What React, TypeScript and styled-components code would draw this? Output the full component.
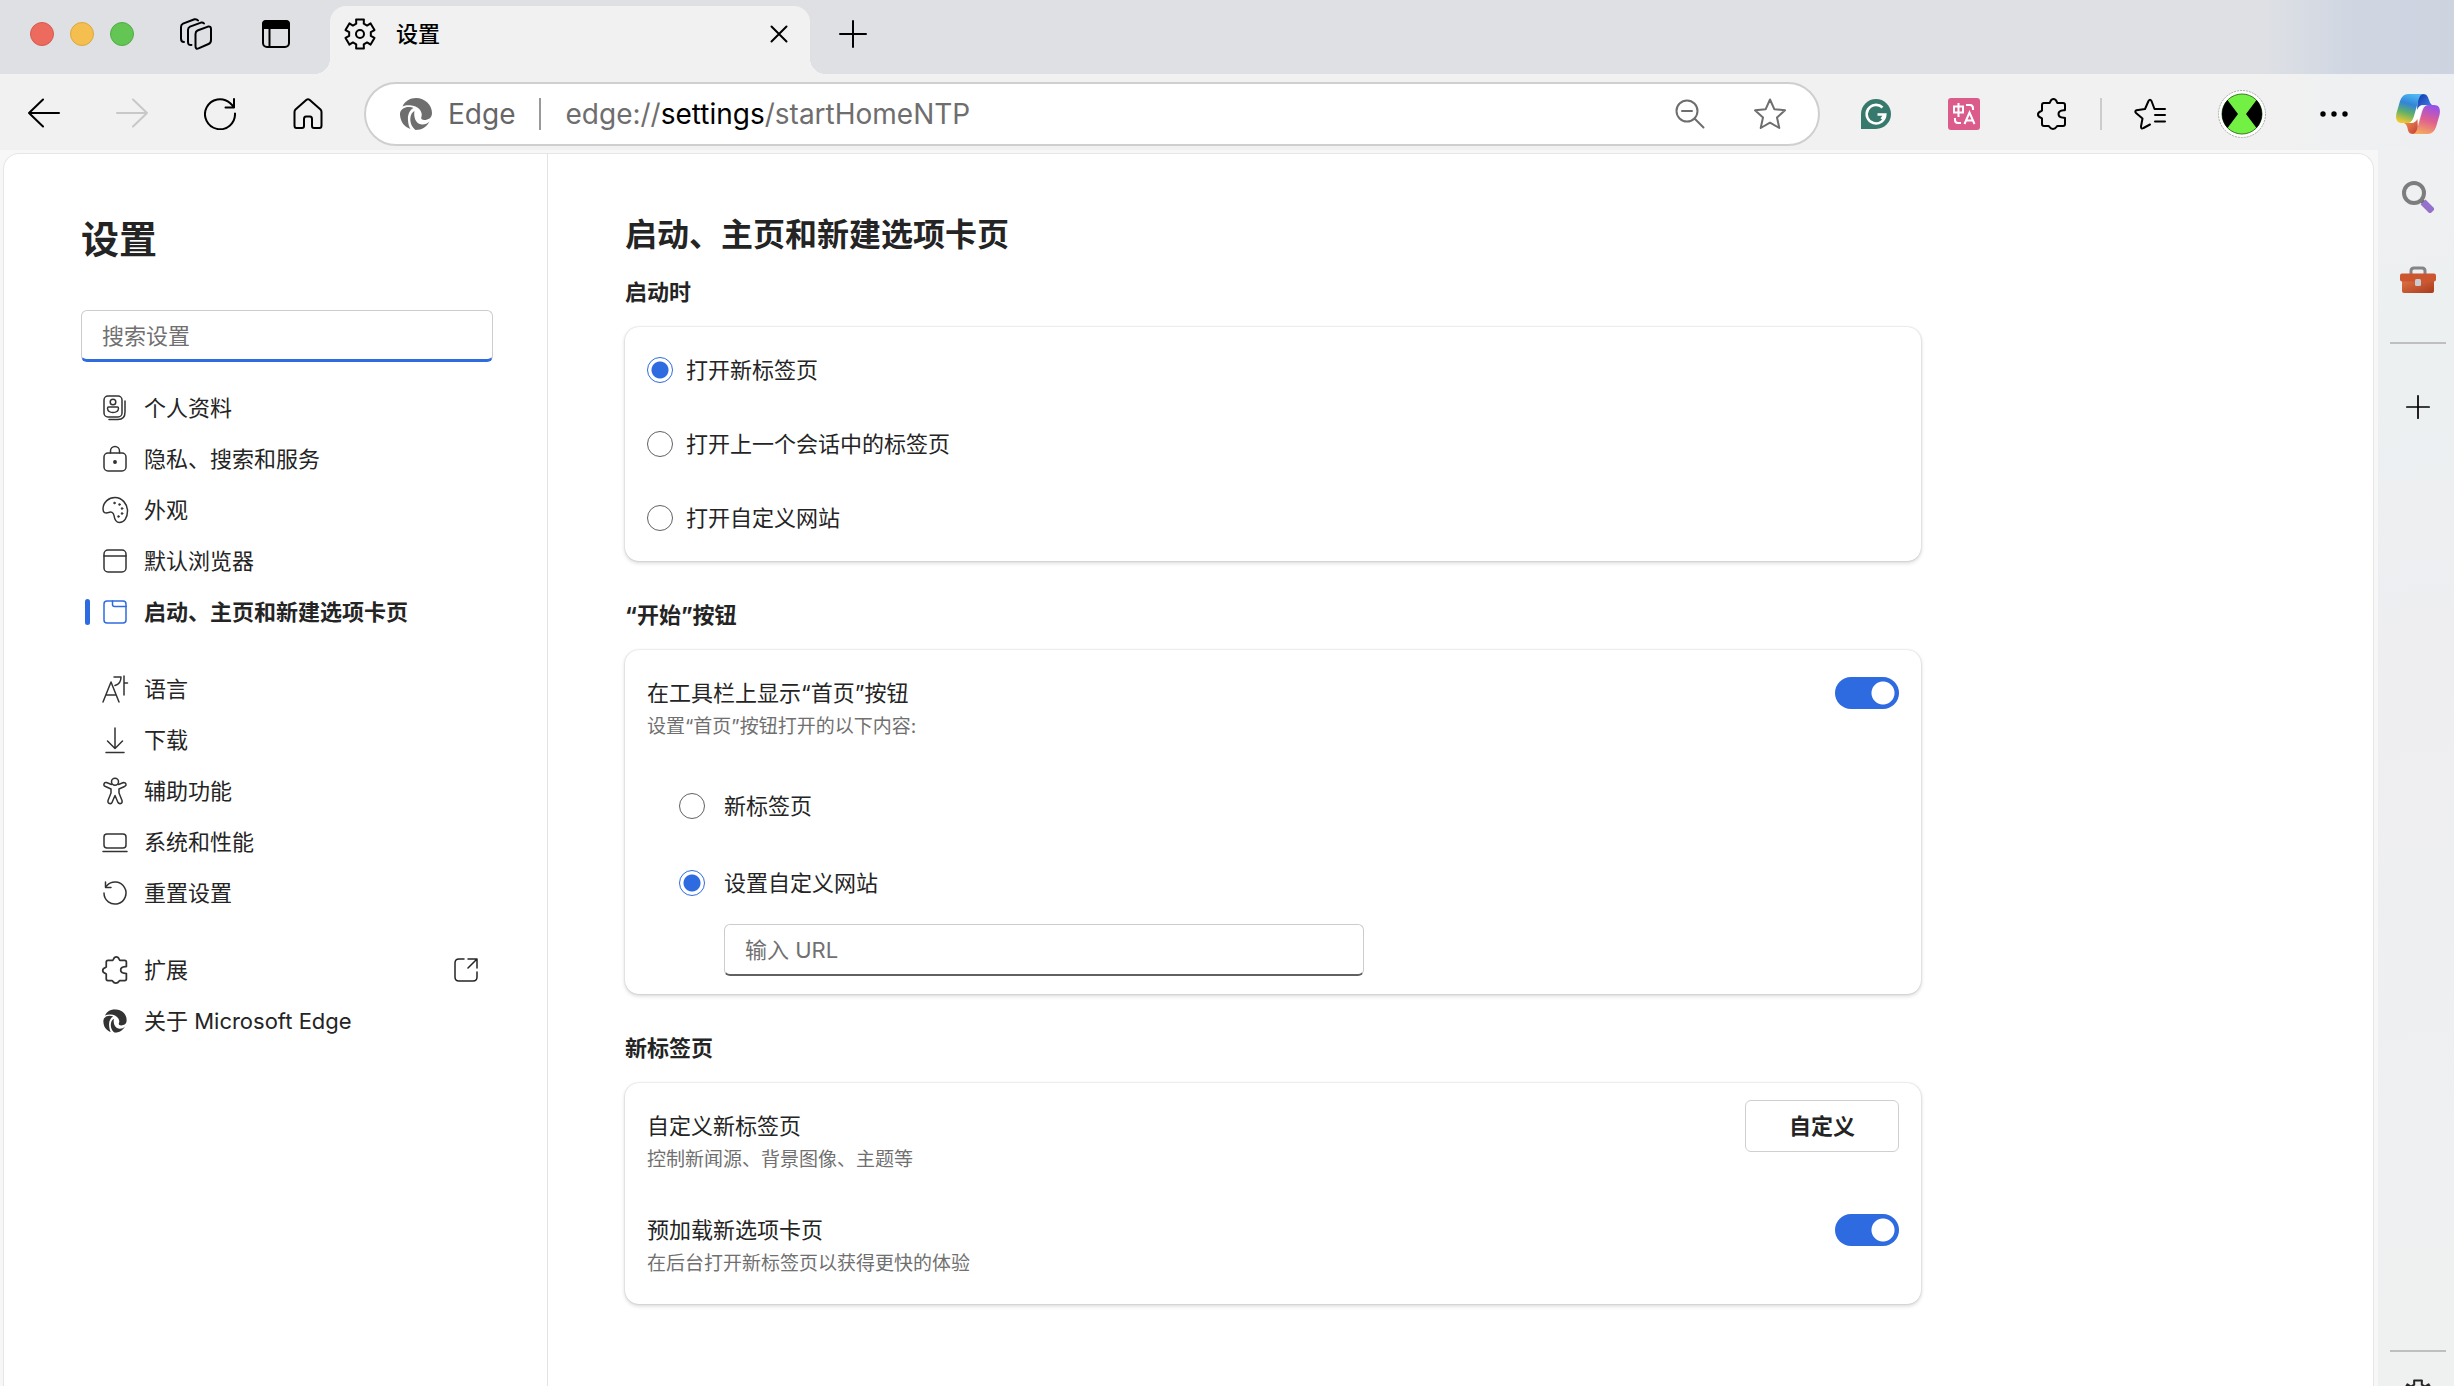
import React from "react";
import styled, { createGlobalStyle } from "styled-components";

const accent = "#2f6be0";
const ink = "#242424";
const muted = "#707070";

const GlobalStyle = createGlobalStyle`
  * { box-sizing: border-box; }
  body {
    margin: 0;
    background: #f1f1f1;
    color: ${ink};
    font-family: Inter, "Noto Sans CJK SC", sans-serif;
    font-size: 22px;
    line-height: 32px;
  }
  button, input { font: inherit; color: inherit; }
`;

/* ---------- browser frame ---------- */

const Window = styled.div`
  display: flex;
  flex-direction: column;
  height: 100vh;
  overflow: hidden;
`;

const TabStrip = styled.header`
  display: flex;
  align-items: flex-start;
  flex: none;
  padding: 6px 0 0 30px;
  background: linear-gradient(90deg, #dee0e4 0, #dee0e4 calc(100% - 190px), #cfd6e2 calc(100% - 100px), #ced3e0 100%);
`;

const Lights = styled.div`
  display: flex;
  align-items: center;
  gap: 16px;
  height: 56px;
  margin-right: 34px;
`;

const Light = styled.button<{ $fill: string; $edge: string }>`
  width: 24px;
  height: 24px;
  padding: 0;
  border: 1px solid ${(p) => p.$edge};
  border-radius: 50%;
  background: ${(p) => p.$fill};
`;

const IconButton = styled.button<{ $color?: string }>`
  display: flex;
  align-items: center;
  justify-content: center;
  flex: none;
  width: 56px;
  height: 56px;
  padding: 0;
  border: 0;
  background: none;
  color: ${(p) => p.$color ?? "#000"};
`;

const StripTools = styled.div`
  display: flex;
  gap: 24px;
  margin-right: 26px;
`;

const Tab = styled.div`
  position: relative;
  display: flex;
  align-items: center;
  width: 480px;
  height: 68px;
  margin-right: 15px;
  padding: 0 3px 12px 14px;
  border-radius: 16px 16px 0 0;
  background: #f1f1f1;
  color: #000;

  &::before,
  &::after {
    content: "";
    position: absolute;
    bottom: 0;
    width: 16px;
    height: 16px;
  }
  &::before {
    right: 100%;
    background: radial-gradient(circle at 0 0, transparent 16px, #f1f1f1 16px);
  }
  &::after {
    left: 100%;
    background: radial-gradient(circle at 100% 0, transparent 16px, #f1f1f1 16px);
  }
`;

const TabTitle = styled.span`
  flex: 1;
  margin-left: 20px;
  font-weight: 500;
`;

const Toolbar = styled.div`
  display: flex;
  align-items: center;
  flex: none;
  padding: 8px 8px 4px 16px;
  background: linear-gradient(90deg, #f1f1f1 calc(100% - 200px), #edeff2 100%);
`;

const ToolGroup = styled.div<{ $gap: number }>`
  display: flex;
  align-items: center;
  gap: ${(p) => p.$gap}px;
`;

const AddressBar = styled.div`
  display: flex;
  align-items: center;
  flex: 1;
  height: 64px;
  margin: 0 28px;
  padding: 0 20px 0 34px;
  border: 2px solid #cfcfcf;
  border-radius: 32px;
  background: #fff;
  color: #6e6e6e;
  font-size: 28px;
`;

const SiteName = styled.span`
  margin-left: 16px;
  color: #666;
`;

const Divider = styled.span<{ $color: string; $gap: number }>`
  flex: none;
  width: 2px;
  height: 32px;
  margin: 0 ${(p) => p.$gap}px;
  background: ${(p) => p.$color};
`;

const UrlText = styled.div`
  flex: 1;
  outline: none;
  white-space: nowrap;
`;

const UrlHost = styled.span`
  color: #000;
`;

const Body = styled.div`
  display: flex;
  flex: 1;
  min-height: 0;
`;

const PageFrame = styled.div`
  display: flex;
  flex: 1;
  min-width: 0;
  padding: 3px 4px 0 3px;
  background: #f7f7f7;
`;

const Page = styled.div`
  display: flex;
  flex: 1;
  border: 1px solid #e6e6e6;
  border-bottom: 0;
  border-radius: 16px 16px 0 0;
  background: #fff;
`;

const SideRail = styled.aside`
  display: flex;
  flex-direction: column;
  align-items: center;
  flex: none;
  width: 76px;
  padding: 19px 0 0 4px;
  background: linear-gradient(170deg, #eff0f2 0, #ecf0f1 20%, #eeeef1 40%, #eff1f1 100%);
`;

const RailTools = styled.div`
  display: flex;
  flex-direction: column;
  gap: 27px;
`;

const RailRule = styled.hr`
  flex: none;
  width: 56px;
  height: 2px;
  margin: 34px 0 35px;
  border: 0;
  background: #bfbfbf;
`;

const RailFoot = styled.div`
  display: flex;
  flex-direction: column;
  align-items: center;
  flex: none;
  height: 36px;
  margin-top: auto;

  hr { margin: 0 0 27px; }
  svg { flex: none; }
`;

/* ---------- settings navigation ---------- */

const Nav = styled.nav`
  flex: none;
  width: 544px;
  padding: 57px 54px 0 77px;
  border-right: 1px solid #e3e3e3;
`;

const NavTitle = styled.h2`
  margin: 0 0 43px;
  font-size: 38px;
  line-height: 56px;
  font-weight: 700;
`;

const TextField = styled.input<{ $focus?: boolean }>`
  display: block;
  width: 100%;
  height: 52px;
  padding: ${(p) => (p.$focus ? "2px 20px 0" : "0 20px")};
  border: 1px solid #cccccc;
  border-bottom: ${(p) => (p.$focus ? `3px solid ${accent}` : "2px solid #616161")};
  border-radius: 6px;
  background: #fff;
  outline: none;

  &::placeholder { color: ${muted}; opacity: 1; }
`;

const NavList = styled.ul`
  margin: 20px 0 0;
  padding: 0;
  list-style: none;

  & + & { margin-top: 26px; }
`;

const NavLink = styled.a<{ $active?: boolean }>`
  display: flex;
  align-items: center;
  height: 51px;
  padding: 0 15px 0 4px;
  color: ${ink};
  font-weight: ${(p) => (p.$active ? 700 : 400)};
  text-decoration: none;

  &::before {
    content: "";
    width: 5px;
    height: 26px;
    margin-right: 11px;
    border-radius: 3px;
    background: ${(p) => (p.$active ? accent : "transparent")};
  }
  svg:first-of-type { color: ${(p) => (p.$active ? accent : "#333")}; }
`;

const NavText = styled.span`
  flex: 1;
  margin-left: 15px;
`;

/* ---------- settings content ---------- */

const Main = styled.main`
  flex: 1;
  min-width: 0;
  padding: 57px 77px 0;
`;

const PageTitle = styled.h1`
  margin: 0 0 17px;
  font-size: 32px;
  line-height: 48px;
  font-weight: 700;
`;

const Section = styled.section`
  max-width: 1296px;
  margin-bottom: 38px;
`;

const SectionTitle = styled.h3`
  margin: 0 0 19px;
  font-size: 22px;
  line-height: 32px;
  font-weight: 700;
`;

const Card = styled.div<{ $pad: string }>`
  padding: ${(p) => p.$pad};
  border-radius: 14px;
  background: #fff;
  box-shadow: 0 0 2px rgba(0, 0, 0, 0.2), 0 2px 4px rgba(0, 0, 0, 0.16);
`;

const Option = styled.label<{ $row: number; $gap: number }>`
  display: flex;
  align-items: center;
  gap: ${(p) => p.$gap}px;
  height: ${(p) => p.$row}px;
`;

const Radio = styled.input`
  appearance: none;
  width: 26px;
  height: 26px;
  margin: 0;
  border: 1px solid #616161;
  border-radius: 50%;

  &:checked {
    border-color: ${accent};
    background: radial-gradient(circle, ${accent} 8px, transparent 9px);
  }
`;

const Nested = styled.div`
  padding: 26px 0 0 32px;
`;

const UrlField = styled.div`
  max-width: 685px;
  padding: 3px 0 0 45px;
`;

const SettingRow = styled.div`
  & + & { margin-top: 40px; }
`;

const RowHead = styled.div`
  display: flex;
  align-items: center;
  justify-content: space-between;
  height: 32px;
`;

const Hint = styled.p`
  margin: 4px 0 0;
  color: ${muted};
  font-size: 19px;
  line-height: 28px;
`;

const Toggle = styled.input`
  appearance: none;
  width: 64px;
  height: 32px;
  margin: 0;
  border-radius: 16px;
  background: radial-gradient(circle at 48px 50%, #fff 11px, transparent 12px) ${accent};
`;

const OutlineButton = styled.button`
  width: 154px;
  height: 52px;
  border: 1px solid #cfcfcf;
  border-radius: 6px;
  background: #fff;
  font-weight: 700;
`;

/* ---------- icons ---------- */

type IconProps = { w?: number; h?: number; box?: string; sw?: number; children: React.ReactNode };

const Icon = ({ w = 32, h = w, box = `0 0 ${w} ${h}`, sw = 2, children }: IconProps) => (
  <svg width={w} height={h} viewBox={box} fill="none" stroke="currentColor" strokeWidth={sw}
    strokeLinecap="round" strokeLinejoin="round" aria-hidden="true">
    {children}
  </svg>
);

const gearPoints = Array.from({ length: 6 }, (_, k) =>
  [[-15, 15], [15, 15], [20, 11], [40, 11]].map(([offset, r]) => {
    const a = ((k * 60 - 90 + offset) * Math.PI) / 180;
    return `${(16 + r * Math.cos(a)).toFixed(2)},${(16 + r * Math.sin(a)).toFixed(2)}`;
  }).join(" ")
).join(" ");

const Gear = () => (
  <Icon><polygon points={gearPoints} /><circle cx="16" cy="16" r="4" /></Icon>
);

const Puzzle = ({ size = 32, sw = 2 }: { size?: number; sw?: number }) => (
  <Icon w={size} box="0 0 32 32" sw={sw}>
    <path d="M8 5H13.500C14.200 5 14.200 1 17.500 1S20.800 5 21.500 5H27Q29 5 29 7V12C28 12.500 22.500 11.500 22.500 16S28 19.500 29 20V26Q29 28 27 28H21.500C20.500 28 20.500 31 17 31S13.500 28 12.500 28H8Q6 28 6 26V20.500C6 19.500 2 20 2 16.500S6 13.500 6 12.500V7Q6 5 8 5Z" />
  </Icon>
);

const EdgeMark = ({ size }: { size: number }) => (
  <svg width={size} height={size} viewBox="0 0 32 32" fill="currentColor" aria-hidden="true">
    <path d="M2.500 8.500C5 3 10 0 16 0C25 0 32 7 32 15C32 20 28 22 24.500 22C21.500 22 20.500 20.500 21.500 18.500C23 14 18.500 7.500 10 7.200C7 7 4.500 7.500 2.500 8.500Z" />
    <path d="M0 17C-.5 12 4 9 8.500 9C10.500 9 12 9.300 13.500 10C9.500 12 7.500 17 8 22C8.200 26 9 29 10.500 31C4.500 29 .5 24 0 17Z" />
    <path d="M14.500 13C13.500 18 15 26 22 26.500C25 26.700 27.500 25.500 29.500 23.500C27 28.500 22 32 15.500 32C11 28.500 9.800 23 10.500 19C11 16 12.500 14 14.500 13Z" />
  </svg>
);

const Plus = ({ size }: { size: number }) => (
  <Icon w={size} box="0 0 28 28"><path d="M14 1V27M1 14H27" /></Icon>
);

const Workspaces = () => (
  <Icon>
    <path d="M17.500 12.500 28 8.600Q31 8 31 11V22Q31 25 28.500 26L18.500 30.400Q15.500 31.500 15.500 28V16Q15.500 13.400 17.500 12.500Z" />
    <path d="M11.500 27Q8 27.500 8 24V12Q8 9.500 10 8.600L21 4.600Q23 4.200 24 5.500" />
    <path d="M4 24Q1 24 1 20.500V9Q1 6.500 3 5.600L14.500 1.300Q17 1 18 2.500" />
  </Icon>
);

const VerticalTabs = () => (
  <Icon>
    <rect x="3" y="3" width="26" height="26" rx="4" />
    <path d="M3 10V6Q3 3 6 3H26Q29 3 29 6V10Z" fill="currentColor" />
    <path d="M9.500 10V29" />
  </Icon>
);

const Back = () => <Icon><path d="M31 15H1M15 1.500 1 15 15 28.500" /></Icon>;
const Forward = () => <Icon><path d="M1 15H31M17 1.500 31 15 17 28.500" /></Icon>;
const Reload = () => (
  <Icon><path d="M31 15.500A15 15 0 1 1 26 5L30 9M30 1V9.500H21.500" /></Icon>
);
const Home = () => (
  <Icon>
    <path d="M2.500 14Q2.500 12.500 3.500 11.500L14.500 1.700Q16 .6 17.500 1.700L28.500 11.500Q29.500 12.500 29.500 14V27.500Q29.500 30 27.500 30H22Q20 30 20 28V21Q20 18.500 18 18.500H14Q12 18.500 12 21V28Q12 30 10 30H4.500Q2.500 30 2.500 27.500Z" />
  </Icon>
);
const ZoomOut = () => (
  <Icon w={30}><circle cx="12" cy="12" r="10.500" /><path d="M19.500 19.500 28.500 28.500M7 12H17" /></Icon>
);
const Star = () => (
  <Icon><path d="M16 1.500 20.300 11.200 31 12.300 23 19.500 25.300 30 16 24.700 6.700 30 9 19.500 1 12.300 11.700 11.200Z" /></Icon>
);
const Favorites = () => (
  <Icon>
    <path d="M31 11H20.500L17.500 3Q16 .5 14.500 3L11 11 2.500 12.300Q.4 13 2 15L8.500 20.500 7 28.500Q7 31.500 9.500 30L16 26.500M21 17H31M21 23.500H31" />
  </Icon>
);

const Grammarly = () => (
  <svg width="32" height="32" viewBox="0 0 32 32" fill="none" aria-hidden="true">
    <path d="M1 31V16A15 15 0 1 1 16 31Z" fill="#37796c" />
    <path d="M22.500 9.500A9.300 9.300 0 1 0 25.300 16.500H17.500M25 16.500 21.500 21" stroke="#fff" strokeWidth="2.600" />
  </svg>
);

const Translate = () => (
  <svg width="32" height="32" viewBox="0 0 32 32" fill="none" stroke="#fff" strokeWidth="2" aria-hidden="true">
    <rect width="32" height="32" rx="3" fill="#db5c8a" stroke="none" />
    <path d="M6 8.500H15V14.500H6ZM10.500 5V19M18 7H22Q25 7 25 10.500V12M7 20V22Q7 25 10 25H13" />
    <path d="M16.500 26 21.500 14.500 26.500 26M18.500 22.500H24.500" />
  </svg>
);

const Avatar = () => (
  <svg width="48" height="48" viewBox="0 0 48 48" aria-hidden="true">
    <circle cx="24" cy="24" r="23.500" fill="#fff" stroke="#aaa" strokeDasharray="2 1" />
    <circle cx="24" cy="24" r="20" fill="#72f144" stroke="#3a7a22" />
    <path d="M9.500 10 20 24 9.500 38A20.500 20.500 0 0 1 9.500 10ZM38.500 10 28 24 38.500 38A20.500 20.500 0 0 0 38.500 10Z" fill="#000" />
  </svg>
);

const Dots = () => (
  <svg width="28" height="8" viewBox="0 0 28 8" aria-hidden="true">
    <circle cx="3" cy="4" r="2.700" /><circle cx="14" cy="4" r="2.700" /><circle cx="25" cy="4" r="2.700" />
  </svg>
);

const Copilot = () => (
  <svg width="44" height="40" viewBox="0 0 44 40" aria-hidden="true">
    <defs>
      <linearGradient id="cpA" x1="0.6" y1="0" x2="0.3" y2="1">
        <stop offset="0" stopColor="#4db8f2" /><stop offset=".35" stopColor="#3284d8" />
        <stop offset=".65" stopColor="#5fb06a" /><stop offset="1" stopColor="#f3c82f" />
      </linearGradient>
      <linearGradient id="cpB" x1="0.6" y1="0" x2="0.3" y2="1">
        <stop offset="0" stopColor="#9a50e8" /><stop offset=".5" stopColor="#e0608f" />
        <stop offset="1" stopColor="#f5ac5e" />
      </linearGradient>
      <linearGradient id="cpC" x1="0" y1="0" x2="1" y2="1">
        <stop offset="0" stopColor="#1530a8" /><stop offset="1" stopColor="#3f8ff0" />
      </linearGradient>
      <linearGradient id="cpD" x1="0" y1="0" x2="1" y2="1">
        <stop offset="0" stopColor="#f39a4c" /><stop offset="1" stopColor="#c43a3a" />
      </linearGradient>
    </defs>
    <path d="M20 12 27 11 22 29 14 29Z" fill="#fff" />
    <path d="M22 0H27C31 0 32 3 33 6Q34 10 36 11H27Q23 11 21 16Z" fill="url(#cpC)" />
    <path d="M22 40H17C13 40 12 37 11.500 34Q10.500 30 8 29H16Q19 29 21.500 25Z" fill="url(#cpD)" />
    <path d="M12 0H28C24 0 23 4 22 8L18 22Q16 29 12 29H6C0 29-.5 24 .5 19L4 7Q6.500 0 12 0Z" fill="url(#cpA)" />
    <path d="M32 40H16C20 40 21 36 22 32L26 18Q28 11 32 11H38C44 11 44.500 16 43.500 21L40 33Q37.500 40 32 40Z" fill="url(#cpB)" />
  </svg>
);

const RailSearch = () => (
  <svg width="32" height="32" viewBox="0 0 32 32" fill="none" aria-hidden="true">
    <path d="M19 19 23 23" stroke="#666" strokeWidth="4" />
    <circle cx="12" cy="12" r="10" stroke="#7d7d7d" strokeWidth="4" />
    <path d="M23.500 23.500 28 28" stroke="#9571cc" strokeWidth="7" strokeLinecap="square" />
  </svg>
);

const Toolbox = () => (
  <svg width="36" height="28" viewBox="0 0 36 28" fill="none" aria-hidden="true">
    <defs>
      <linearGradient id="tb" x1="0" y1="0" x2="1" y2="1">
        <stop offset="0" stopColor="#e37545" /><stop offset="1" stopColor="#a83a1e" />
      </linearGradient>
    </defs>
    <path d="M11 8V5Q11 2 14 2H22Q25 2 25 5V8" stroke="#858585" strokeWidth="3" />
    <rect x="2" y="13" width="32" height="14" rx="2" fill="url(#tb)" />
    <rect x="0" y="7.500" width="36" height="8" rx="2" fill="#cc5630" />
    <rect x="15" y="13" width="6" height="7" rx="1.500" fill="#c9cdd1" />
  </svg>
);

const navIcons: Record<string, React.ReactNode> = {
  profile: (
    <>
      <rect x="3" y="2" width="18" height="21" rx="4" />
      <circle cx="12" cy="8" r="2.800" />
      <path d="M7.500 13H16.500Q17.500 13 17.500 14.500Q17 18.500 12 18.500T6.500 14.500Q6.500 13 7.500 13ZM24 7V18Q24 25.500 17 25.500H8" />
    </>
  ),
  lock: (
    <>
      <rect x="3" y="8" width="22" height="18" rx="4" />
      <path d="M9.500 8V6A4.500 4.500 0 0 1 18.500 6V8" />
      <circle cx="14" cy="17" r="1.200" fill="currentColor" />
    </>
  ),
  palette: (
    <>
      <path d="M2 13C2 6 8 1.500 14 1.500C21 1.500 26.500 8 26.500 15C26.500 22 23 26.500 18.500 26.500C14.500 26.500 13.500 23 13 19.500C12.500 16 10 15.500 7.500 16.500C4.500 17.500 2 17 2 13Z" />
      {[[13.5, 7], [18.5, 8.5], [21, 12.5], [21, 17.5], [17.5, 20.5]].map(([x, y]) => (
        <circle key={`${x}-${y}`} cx={x} cy={y} r="1" fill="currentColor" strokeWidth="0.500" />
      ))}
    </>
  ),
  browser: <><rect x="3" y="3" width="22" height="22" rx="4" /><path d="M3 9H25" /></>,
  tab: <><rect x="3" y="3" width="22" height="22" rx="3" /><path d="M11.500 3V6.500Q11.500 8.500 13.500 8.500H25" /></>,
  language: (
    <path d="M2 27 10 7 18 27M5 20H15M13 2H20Q20 9 14 10.500M23 1V20M23 8H26.500" />
  ),
  download: <path d="M14 2V22M6.500 15 14 22.500 21.500 15M5 26.500H23" />,
  person: (
    <>
      <circle cx="14" cy="4.800" r="3.500" />
      <path d="M10.500 7.500 5.500 5.500Q3.500 5 3 7T4.500 9.500L10 12V16L7 23.500Q6.500 26 8.500 26.500T11 25.500L14 18.500 17 25.500Q18 27 19.800 26.500T21 23.500L18 16V12L23.500 9.500Q25.500 8.500 25 7T22.500 5.500L17.500 7.500" />
    </>
  ),
  laptop: <><rect x="3" y="6" width="22" height="14" rx="3" /><path d="M2 23.500H26" /></>,
  reset: <path d="M3 14A11 11 0 1 0 6 6.500L4.500 8M4.500 3V8.500H10" />,
};

const NavIcon = ({ name }: { name: string }) => {
  if (name === "puzzle") return <Puzzle size={28} />;
  if (name === "edge")
    return (
      <svg width="28" height="28" viewBox="-3 -3 38 38" fill="currentColor" aria-hidden="true">
        <EdgeMark size={32} />
      </svg>
    );
  return <Icon w={28} sw={1.5}>{navIcons[name]}</Icon>;
};

const External = () => (
  <Icon w={24} sw={1.5}>
    <path d="M10 1H5Q1 1 1 5V19Q1 23 5 23H19Q23 23 23 19V14M14 1H23V10M23 1 14 10" />
  </Icon>
);

/* ---------- data ---------- */

type NavEntry = { icon: string; label: string; active?: boolean; external?: boolean };

const navGroups: NavEntry[][] = [
  [
    { icon: "profile", label: "个人资料" },
    { icon: "lock", label: "隐私、搜索和服务" },
    { icon: "palette", label: "外观" },
    { icon: "browser", label: "默认浏览器" },
    { icon: "tab", label: "启动、主页和新建选项卡页", active: true },
  ],
  [
    { icon: "language", label: "语言" },
    { icon: "download", label: "下载" },
    { icon: "person", label: "辅助功能" },
    { icon: "laptop", label: "系统和性能" },
    { icon: "reset", label: "重置设置" },
  ],
  [
    { icon: "puzzle", label: "扩展", external: true },
    { icon: "edge", label: "关于 Microsoft Edge" },
  ],
];

const startupOptions = ["打开新标签页", "打开上一个会话中的标签页", "打开自定义网站"];
const homeOptions = ["新标签页", "设置自定义网站"];

export default function App() {
  return (
    <Window>
      <GlobalStyle />
      <TabStrip>
        <Lights>
          <Light aria-label="关闭窗口" $fill="#ed6a5e" $edge="#d65a50" />
          <Light aria-label="最小化" $fill="#f5bf4f" $edge="#dba73f" />
          <Light aria-label="最大化" $fill="#62c554" $edge="#52ac45" />
        </Lights>
        <StripTools>
          <IconButton aria-label="工作区"><Workspaces /></IconButton>
          <IconButton aria-label="标签页操作"><VerticalTabs /></IconButton>
        </StripTools>
        <Tab>
          <Gear />
          <TabTitle>设置</TabTitle>
          <IconButton aria-label="关闭标签页">
            <Icon w={18}><path d="M1.500 1.500 16.500 16.500M16.500 1.500 1.500 16.500" /></Icon>
          </IconButton>
        </Tab>
        <IconButton aria-label="新建标签页"><Plus size={28} /></IconButton>
      </TabStrip>

      <Toolbar>
        <ToolGroup $gap={32}>
          <IconButton aria-label="后退"><Back /></IconButton>
          <IconButton aria-label="前进" $color="#c8c8c8"><Forward /></IconButton>
          <IconButton aria-label="刷新"><Reload /></IconButton>
          <IconButton aria-label="主页"><Home /></IconButton>
        </ToolGroup>
        <AddressBar>
          <EdgeMark size={32} />
          <SiteName>Edge</SiteName>
          <Divider $color="#999" $gap={24} />
          <UrlText role="textbox" aria-label="地址" contentEditable suppressContentEditableWarning spellCheck={false}>
            edge://<UrlHost>settings</UrlHost>/startHomeNTP
          </UrlText>
          <ToolGroup $gap={24}>
            <IconButton aria-label="缩小" $color="#6e6e6e"><ZoomOut /></IconButton>
            <IconButton aria-label="收藏此页" $color="#6e6e6e"><Star /></IconButton>
          </ToolGroup>
        </AddressBar>
        <ToolGroup $gap={32}>
          <IconButton aria-label="Grammarly"><Grammarly /></IconButton>
          <IconButton aria-label="翻译"><Translate /></IconButton>
          <IconButton aria-label="扩展"><Puzzle /></IconButton>
        </ToolGroup>
        <Divider $color="#cccccc" $gap={20} />
        <ToolGroup $gap={36}>
          <IconButton aria-label="收藏夹"><Favorites /></IconButton>
          <IconButton aria-label="个人资料"><Avatar /></IconButton>
          <IconButton aria-label="更多"><Dots /></IconButton>
        </ToolGroup>
        <ToolGroup $gap={28}>
          <span />
          <IconButton aria-label="Copilot"><Copilot /></IconButton>
        </ToolGroup>
      </Toolbar>

      <Body>
        <PageFrame>
          <Page>
            <Nav aria-label="设置">
              <NavTitle>设置</NavTitle>
              <TextField $focus type="text" aria-label="搜索设置" placeholder="搜索设置" />
              {navGroups.map((group) => (
                <NavList key={group[0].icon}>
                  {group.map((item) => (
                    <li key={item.icon}>
                      <NavLink href="#" $active={item.active}>
                        <NavIcon name={item.icon} />
                        <NavText>{item.label}</NavText>
                        {item.external && <External />}
                      </NavLink>
                    </li>
                  ))}
                </NavList>
              ))}
            </Nav>

            <Main>
              <PageTitle>启动、主页和新建选项卡页</PageTitle>

              <Section>
                <SectionTitle>启动时</SectionTitle>
                <Card $pad="6px 22px">
                  {startupOptions.map((label, i) => (
                    <Option key={label} $row={74} $gap={13}>
                      <Radio type="radio" name="startup" defaultChecked={i === 0} />
                      {label}
                    </Option>
                  ))}
                </Card>
              </Section>

              <Section>
                <SectionTitle>“开始”按钮</SectionTitle>
                <Card $pad="27px 22px 18px">
                  <RowHead>
                    <label htmlFor="home-button">在工具栏上显示“首页”按钮</label>
                    <Toggle id="home-button" type="checkbox" role="switch" defaultChecked />
                  </RowHead>
                  <Hint>设置“首页”按钮打开的以下内容:</Hint>
                  <Nested>
                    {homeOptions.map((label, i) => (
                      <Option key={label} $row={77} $gap={19}>
                        <Radio type="radio" name="home" defaultChecked={i === 1} />
                        {label}
                      </Option>
                    ))}
                    <UrlField>
                      <TextField type="text" aria-label="输入 URL" placeholder="输入 URL" />
                    </UrlField>
                  </Nested>
                </Card>
              </Section>

              <Section>
                <SectionTitle>新标签页</SectionTitle>
                <Card $pad="27px 22px 26px">
                  <SettingRow>
                    <RowHead>
                      <span>自定义新标签页</span>
                      <OutlineButton>自定义</OutlineButton>
                    </RowHead>
                    <Hint>控制新闻源、背景图像、主题等</Hint>
                  </SettingRow>
                  <SettingRow>
                    <RowHead>
                      <label htmlFor="preload">预加载新选项卡页</label>
                      <Toggle id="preload" type="checkbox" role="switch" defaultChecked />
                    </RowHead>
                    <Hint>在后台打开新标签页以获得更快的体验</Hint>
                  </SettingRow>
                </Card>
              </Section>
            </Main>
          </Page>
        </PageFrame>

        <SideRail>
          <RailTools>
            <IconButton aria-label="搜索"><RailSearch /></IconButton>
            <IconButton aria-label="工具"><Toolbox /></IconButton>
          </RailTools>
          <RailRule />
          <IconButton aria-label="自定义边栏"><Plus size={24} /></IconButton>
          <RailFoot>
            <RailRule />
            <Gear />
          </RailFoot>
        </SideRail>
      </Body>
    </Window>
  );
}
